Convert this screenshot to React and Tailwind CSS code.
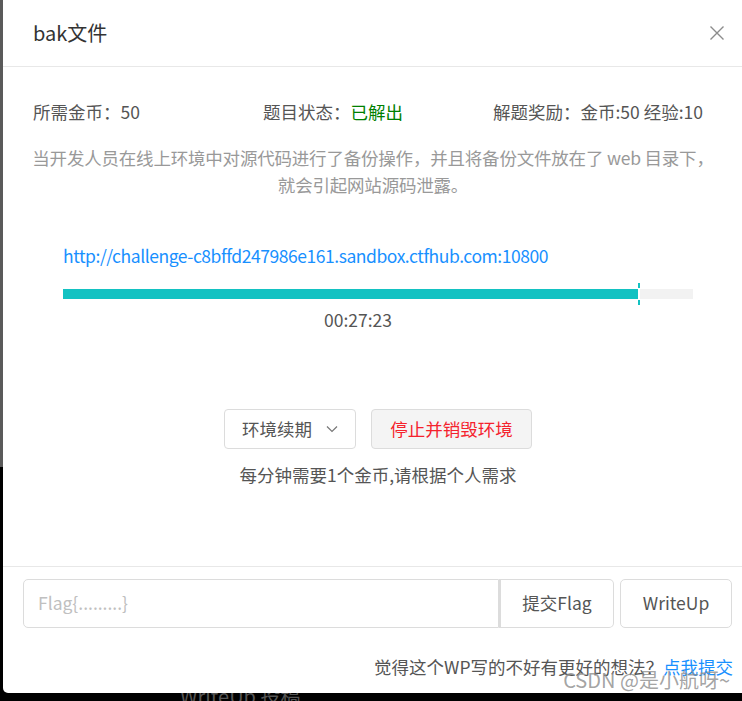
import React from 'react';

const FONT = { fontFamily: '"Noto Sans CJK SC", "Liberation Sans", sans-serif' };

function CloseIcon() {
  return (
    <svg width="16" height="16" viewBox="0 0 16 16" className="text-[#8c8c8c]">
      <path d="M1.5 1.5 L14.5 14.5 M14.5 1.5 L1.5 14.5" stroke="currentColor" strokeWidth="1.4" fill="none" />
    </svg>
  );
}

function ChevronDown() {
  return (
    <svg width="12" height="8" viewBox="0 0 12 8" className="text-[#777]">
      <path d="M1 1.5 L6 6.5 L11 1.5" stroke="currentColor" strokeWidth="1.2" fill="none" />
    </svg>
  );
}

export default function App() {
  return (
    <div style={FONT} className="w-[742px] h-[701px] bg-black flex flex-col overflow-hidden">
      <div className="flex h-[693px]">
        {/* backdrop edge */}
        <div className="w-[3px] flex flex-col">
          <div className="h-[467px] bg-[#5a5a5a]" />
          <div className="flex-1 bg-black" />
        </div>

        {/* modal */}
        <div className="relative w-[739px] bg-white rounded-bl-[5px] flex flex-col text-[17.5px] text-[#555]">
          <div className="h-[67px] flex items-center justify-between pl-[30px] pr-[17px] border-b border-[#e8e8e8] shrink-0">
            <span className="text-[20px] text-[#333]">bak文件</span>
            <CloseIcon />
          </div>

          <div className="flex-1 flex flex-col">
            <div className="flex pt-[33px] pl-[30px] leading-[24px]">
              <div className="w-[230px]">所需金币：50</div>
              <div className="w-[230px]">
                题目状态：<span className="text-[#008000]">已解出</span>
              </div>
              <div>解题奖励：金币:50 经验:10</div>
            </div>

            <p className="mt-[20px] w-[700px] ml-[20px] text-center leading-[27px] text-[#999] whitespace-nowrap tracking-[-0.2px]">
              当开发人员在线上环境中对源代码进行了备份操作，并且将备份文件放在了 web 目录下，
              <br />
              就会引起网站源码泄露。
            </p>

            <div className="ml-[60px] mt-[46px] leading-[24px] text-[#1890ff] tracking-[-0.45px]">
              http://challenge-c8bffd247986e161.sandbox.ctfhub.com:10800
            </div>

            <div className="ml-[60px] mt-[21px] w-[630px] h-[10px] flex">
              <div className="w-[575px] bg-[#13c2c2]" />
              <div className="relative w-[2px] bg-white">
                <div className="absolute left-0 top-[-6px] w-[2px] h-[5px] bg-[#13c2c2]" />
                <div className="absolute left-0 bottom-[-6px] w-[2px] h-[5px] bg-[#13c2c2]" />
              </div>
              <div className="flex-1 bg-[#f2f2f2]" />
            </div>

            <div className="ml-[60px] mt-[9px] w-[590px] text-center leading-[24px]">00:27:23</div>

            <div className="ml-[221px] mt-[77px] flex gap-[15px]">
              <button className="w-[132px] h-[40px] border border-[#dcdcdc] rounded-[4px] bg-white flex items-center justify-center gap-[14px] text-[#555]">
                <span>环境续期</span>
                <ChevronDown />
              </button>
              <button className="w-[161px] h-[40px] border border-[#dcdcdc] rounded-[4px] bg-[#f4f4f4] text-[#f5222d]">
                停止并销毁环境
              </button>
            </div>

            <div className="ml-[221px] mt-[14px] w-[308px] text-center leading-[24px]">
              每分钟需要1个金币,请根据个人需求
            </div>
          </div>

          <div className="h-[127px] shrink-0 border-t border-[#e8e8e8] flex flex-col">
            <div className="mt-[12px] ml-[20px] flex h-[49px]">
              <div className="w-[476px] border border-[#dcdcdc] rounded-l-[5px] flex items-center pl-[14px] text-[#c0c0c0]">
                Flag{'{'}.........{'}'}
              </div>
              <button className="w-[115px] border border-l-2 border-[#dcdcdc] rounded-r-[5px] text-[#555]">提交Flag</button>
              <button className="ml-[6px] w-[112px] border border-[#dcdcdc] rounded-[5px] text-[#555]">WriteUp</button>
            </div>
            <div className="mt-[27px] flex justify-end pr-[9px] leading-[24px]">
              <span>觉得这个WP写的不好有更好的想法？</span>
              <span className="text-[#1890ff]">点我提交</span>
            </div>
          </div>

          <div className="absolute right-[12px] bottom-[1px] text-[20px] leading-[24px] text-[#8c8c8c]/80">
            CSDN @是小航呀~
          </div>
        </div>
      </div>

      <div className="h-[8px] overflow-hidden">
        <div className="ml-[180px] -mt-[9px] text-[20px] leading-[24px] text-[#555]">WriteUp 投稿</div>
      </div>
    </div>
  );
}
